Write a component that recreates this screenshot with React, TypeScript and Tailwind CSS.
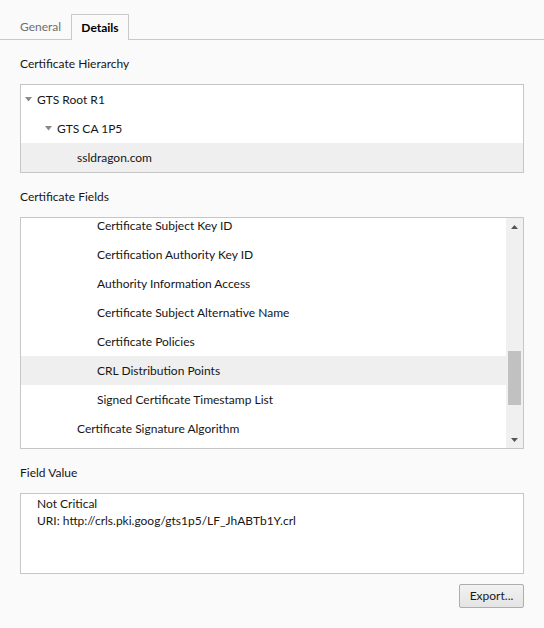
import React from 'react';

const HIERARCHY = [
  { label: 'GTS Root R1', level: 0, open: true },
  { label: 'GTS CA 1P5', level: 1, open: true },
  { label: 'ssldragon.com', level: 2, selected: true },
];

const FIELDS = [
  { label: 'Certificate Subject Key ID', level: 3 },
  { label: 'Certification Authority Key ID', level: 3 },
  { label: 'Authority Information Access', level: 3 },
  { label: 'Certificate Subject Alternative Name', level: 3 },
  { label: 'Certificate Policies', level: 3 },
  { label: 'CRL Distribution Points', level: 3, selected: true },
  { label: 'Signed Certificate Timestamp List', level: 3 },
  { label: 'Certificate Signature Algorithm', level: 2 },
];

const indent: Record<number, string> = {
  0: 'pl-[4px]',
  1: 'pl-[24px]',
  2: 'pl-[56px]',
  3: 'pl-[76px]',
};

function Caret() {
  return (
    <svg width="7" height="5" viewBox="0 0 7 5" className="mr-[5px] shrink-0">
      <path d="M0 0 L7 0 L3.5 4.5 Z" fill="#8a8a8a" />
    </svg>
  );
}

function TreeRow({ label, level, open, selected }: any) {
  return (
    <div className={`h-[29px] flex items-center ${indent[level]} ${selected ? 'bg-[#efefef]' : ''}`}>
      {open && <Caret />}
      <span>{label}</span>
    </div>
  );
}

function Label({ children }: any) {
  return <p className="h-4 leading-4 mb-3">{children}</p>;
}

export default function App() {
  return (
    <div className="w-[544px] h-[628px] bg-[#fafafa] text-[#161616] text-[12px] overflow-hidden" style={{ fontFamily: 'Lato, "Noto Sans", sans-serif' }}>
      {/* tabs */}
      <div className="h-10 border-b border-[#c9c9c9] flex items-end pl-5">
        <div className="h-[26px] w-[51px] flex items-center text-[#6e6e6e] pt-[2px]">General</div>
        <div className="h-[26px] -mb-px w-[58px] border border-b-0 border-[#c9c9c9] bg-[#fafafa] flex items-center justify-center font-bold text-black pt-px">
          Details
        </div>
      </div>

      <div className="px-5 pt-4">
        <Label>Certificate Hierarchy</Label>
        <div className="border border-[#c6c6c6] bg-white mb-4">
          {HIERARCHY.map((r) => (
            <TreeRow key={r.label} {...r} />
          ))}
        </div>

        <Label>Certificate Fields</Label>
        <div className="border border-[#c6c6c6] bg-white h-[232px] flex mb-4">
          <div className="flex-1 overflow-hidden">
            <div className="-mt-[7px]">
              {FIELDS.map((r) => (
                <TreeRow key={r.label} {...r} />
              ))}
            </div>
          </div>
          <div className="w-[17px] bg-[#f0f0f0] flex flex-col items-center">
            <div className="h-[17px] flex items-center justify-center">
              <svg width="7" height="4" viewBox="0 0 7 4">
                <path d="M3.5 0 L7 4 L0 4 Z" fill="#555" />
              </svg>
            </div>
            <div className="flex-1 w-full px-[2px] pt-[116px]">
              <div className="h-[54px] bg-[#c1c1c1]" />
            </div>
            <div className="h-[17px] flex items-center justify-center">
              <svg width="7" height="4" viewBox="0 0 7 4">
                <path d="M0 0 L7 0 L3.5 4 Z" fill="#555" />
              </svg>
            </div>
          </div>
        </div>

        <Label>Field Value</Label>
        <div className="border border-[#c6c6c6] bg-white h-[81px] pl-4 pt-px leading-[17px]">
          <p>Not Critical</p>
          <p>URI: http://crls.pki.goog/gts1p5/LF_JhABTb1Y.crl</p>
        </div>

        <div className="flex justify-end mt-[10px]">
          <button className="h-[24px] w-[65px] border border-[#adadad] rounded-[2px] bg-gradient-to-b from-[#f2f2f2] to-[#e4e4e4] text-[#1b1b1b] text-[12px] pb-px">
            Export...
          </button>
        </div>
      </div>
    </div>
  );
}
